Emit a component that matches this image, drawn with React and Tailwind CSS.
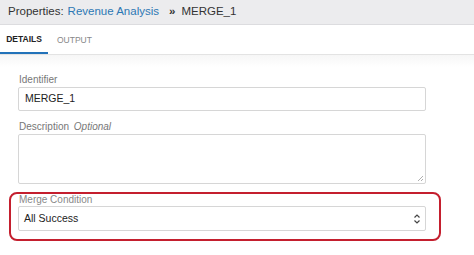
export default function App() {
  return (
    <div className="w-[474px] h-[255px] bg-white overflow-hidden font-['Liberation_Sans',Arial,sans-serif]">
      {/* Title bar */}
      <div className="h-[25px] bg-[#ececee] border-b border-[#dcdcdf] flex items-center pl-[8px] text-[11.5px] text-[#333]">
        <span>Properties:</span>
        <span className="ml-[4px] text-[#2c78b4]">Revenue Analysis</span>
        <span className="ml-[10px] mr-[6px] font-bold">»</span>
        <span>MERGE_1</span>
      </div>

      {/* Tabs */}
      <div className="h-[30px] flex items-stretch border-b border-[#e3e3e3] text-[8.5px]">
        <div className="w-[48px] flex items-center justify-center font-bold text-[#222] border-b-2 border-[#2272b9] pt-[2px]">
          DETAILS
        </div>
        <div className="flex items-center pl-[9px] pt-[2px] text-[#888]">OUTPUT</div>
      </div>

      {/* Form */}
      <div className="bg-gradient-to-b from-[#f6f6f6] to-white to-[12px] pt-[18px] pl-[18px] pr-[48px]">
        <div className="text-[10px] text-[#777] leading-[13px] pl-[1px]">Identifier</div>
        <div className="mt-[1px] h-[24px] border border-[#d6d6d6] rounded-[2px] flex items-center pl-[6px] text-[10.5px] text-[#222]">
          MERGE_1
        </div>

        <div className="mt-[9px] text-[10px] text-[#777] leading-[13px] pl-[1px]">
          Description <i className="ml-[2px]">Optional</i>
        </div>
        <div className="relative mt-[1px] h-[50px] border border-[#d6d6d6] rounded-[2px]">
          <svg className="absolute right-[1px] bottom-[1px]" width="7" height="7" viewBox="0 0 7 7">
            <path d="M6 1L1 6M6 4L4 6" stroke="#9a9a9a" strokeWidth="0.8" fill="none" />
          </svg>
        </div>

        <div className="-ml-[9px] -mr-[15px] mt-[8px] border-2 border-[#c41f2e] rounded-[8px] pb-[8px] pl-[7px] pr-[13px]">
          <div className="text-[10px] text-[#888] leading-[12px] pl-[1px]">Merge Condition</div>
          <div className="h-[25px] border border-[#d6d6d6] rounded-[2px] flex items-center justify-between pl-[5px] pr-[4px] text-[10.5px] text-[#222]">
            <span>All Success</span>
            <svg width="8" height="12" viewBox="0 0 8 12">
              <path d="M1.5 4.5L4 2L6.5 4.5M1.5 7.5L4 10L6.5 7.5" stroke="#444" strokeWidth="1.2" fill="none" />
            </svg>
          </div>
        </div>
      </div>
    </div>
  );
}
